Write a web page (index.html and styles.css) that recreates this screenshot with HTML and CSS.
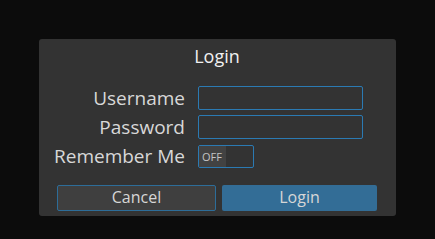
FILE: index.html
```html
<!DOCTYPE html>
<html lang="en">
<head>
    <meta charset="UTF-8">
    <meta name="viewport" content="width=device-width, initial-scale=1.0">
    <title>Login</title>
    <link rel="stylesheet" href="styles.css">
</head>
<body>
    <div class="dialog">
        <h1 class="title">Login</h1>

        <div class="form">
            <div class="row">
                <label for="username">Username</label>
                <input type="text" id="username">
            </div>
            <div class="row">
                <label for="password">Password</label>
                <input type="password" id="password">
            </div>
            <div class="row">
                <label>Remember Me</label>
                <div class="toggle"><span class="toggle-off">OFF</span></div>
            </div>
        </div>

        <div class="buttons">
            <button class="btn btn-cancel">Cancel</button>
            <button class="btn btn-login">Login</button>
        </div>
    </div>
</body>
</html>
```

FILE: styles.css
```css
body {
    margin: 0;
    padding: 39px 0 0 39px;
    background-color: #0c0c0c;
    font-family: "Open Sans", sans-serif;
    color: #e6e6e6;
    height: 239px;
    box-sizing: border-box;
    overflow: hidden;
}
.dialog {
    width: 357px;
    height: 177px;
    box-sizing: border-box;
    background: #333333;
    border-radius: 3px;
    padding: 5px 19px 0 18px;
}
.title {
    margin: 0;
    text-align: center;
    font-size: 18px;
    font-weight: normal;
    line-height: 24px;
    color: #f0f0f0;
}
.form {
    margin-top: 18px;
    display: flex;
    flex-direction: column;
    gap: 5px;
}
.row {
    display: flex;
    align-items: center;
    height: 24px;
}
.row label {
    width: 128px;
    flex-shrink: 0;
    display: flex;
    justify-content: flex-end;
    margin-right: 13px;
    font-size: 19px;
    line-height: 24px;
    color: #d8d8d8;
    white-space: nowrap;
}
.row input {
    width: 165px;
    height: 24px;
    box-sizing: border-box;
    background: #333333;
    border: 1px solid #2b7ab3;
    border-radius: 2px;
    color: #e6e6e6;
    padding: 0 4px;
    outline: none;
}
.toggle {
    width: 56px;
    height: 23px;
    box-sizing: border-box;
    border: 1px solid #2b7ab3;
    border-radius: 2px;
    display: flex;
}
.toggle-off {
    width: 27px;
    background: #424242;
    font-size: 11px;
    color: #c4c4c4;
    line-height: 21px;
    padding-left: 3px;
    box-sizing: border-box;
}
.buttons {
    display: flex;
    gap: 6px;
    margin-top: 17px;
}
.btn {
    height: 26px;
    box-sizing: border-box;
    border-radius: 2px;
    font-family: "Open Sans", sans-serif;
    font-size: 16px;
    line-height: 22px;
    color: #d6d6d6;
    padding: 0 0 2px;
}
.btn-cancel {
    width: 159px;
    background: #3f3f3f;
    border: 1px solid #2d6d99;
}
.btn-login {
    width: 155px;
    background: #336d96;
    border: none;
}
```
